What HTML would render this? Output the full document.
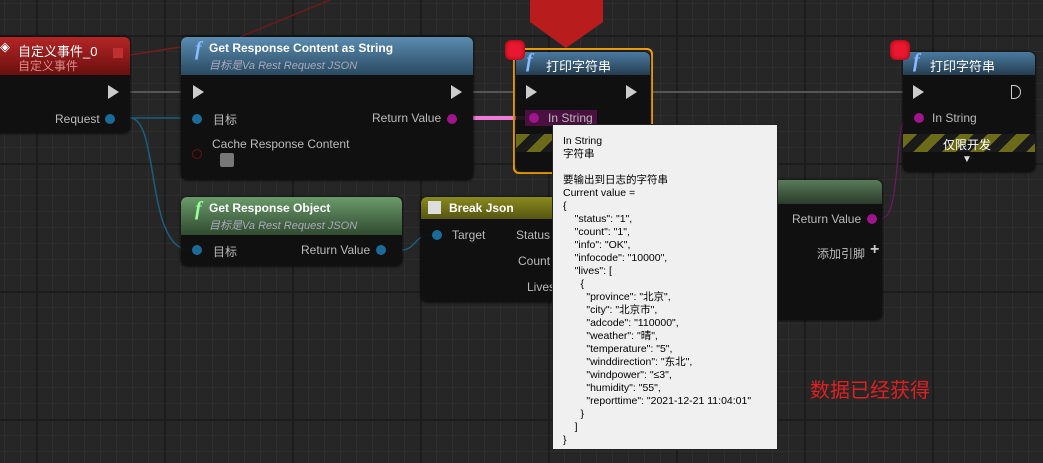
<!DOCTYPE html><html><head><meta charset="utf-8"><style>
body{margin:0;width:1043px;height:463px;overflow:hidden;position:relative;font-family:"Liberation Sans","Noto Sans CJK SC",sans-serif;
background-color:#262626;
background-image:linear-gradient(#1c1c1c 2px,transparent 2px),linear-gradient(90deg,#1c1c1c 2px,transparent 2px),linear-gradient(#2e2e2e 1px,transparent 1px),linear-gradient(90deg,#2e2e2e 1px,transparent 1px);
background-size:128px 128px,128px 128px,16px 16px,16px 16px;background-position:-93px 35px,36px -93px,0 3px,4px 0;}
.n{position:absolute;background:rgba(14,15,14,.93);border-radius:6px;box-shadow:0 0 3px #000;color:#bbb;font-size:12px;overflow:hidden}
.h{height:38px;position:relative;color:#fff;font-weight:bold;font-size:12px}
.h .t{position:absolute;left:28px;top:4px}
.h .s{position:absolute;left:28px;top:20px;font-weight:normal;font-style:italic;color:#aab;font-size:11px}
.f{position:absolute;left:14px;top:1px;color:#8bf;font-style:italic;font-family:"Liberation Serif",serif;font-size:20px}
.a{position:absolute;width:0;height:0;border-top:7px solid transparent;border-bottom:7px solid transparent;border-left:11px solid #ccc}
.p{position:absolute;width:10px;height:10px;border-radius:50%}
.l{position:absolute;font-size:12px;color:#bbb}
.tip{position:absolute;left:552px;top:124px;width:226px;height:326px;background:#f0f0f0;border:1px solid #222;font-size:10.5px;line-height:13px;color:#000;padding:10px 0 0 10px;box-sizing:border-box;white-space:pre;font-family:"Liberation Sans","Noto Sans CJK SC",sans-serif}
.hz{position:absolute;background:repeating-linear-gradient(135deg,#6b6b1a 0 10px,#1a1a1a 10px 20px)}
</style></head><body>
<svg style="position:absolute;left:0;top:0" width="1043" height="463">
<path d="M130 55 L181 47" stroke="#7a1c1c" stroke-width="1.5" fill="none"/>
<path d="M240 37 L330 0" stroke="#6a1c1c" stroke-width="1.5"/>
<path d="M130 92 L181 92 M473 92 L513 92 M653 92 L903 92" stroke="#555" stroke-width="2"/>
<path d="M130 118 L181 118" stroke="#1b5e7e" stroke-width="1.5"/>
<path d="M130 118 C160 118 145 250 190 250" stroke="#1b5e7e" stroke-width="1.5" fill="none"/>
<path d="M402 250 C415 250 415 235 430 235" stroke="#1b5e7e" stroke-width="1.5" fill="none"/>
<path d="M473 118 L530 118" stroke="#f07ad8" stroke-width="4"/>
<path d="M882 218 C900 218 895 130 905 118" stroke="#7a1670" stroke-width="1" fill="none"/>
<path d="M530 0 L603 0 L603 22 L566 48 L530 22Z" fill="#b81c1c"/>
</svg>
<div class="n" style="left:-8px;top:37px;width:138px;height:96px"><div class="h" style="background:linear-gradient(#b52525,#6a1010)"><span class="t" style="left:26px;font-weight:normal;font-size:13px">自定义事件_0</span><span class="s" style="left:26px;font-style:normal;color:#d88;font-size:12px">自定义事件</span><div style="position:absolute;left:121px;top:11px;width:10px;height:10px;background:#c03030"></div></div>
<div class="a" style="left:116px;top:48px"></div><span class="l" style="left:63px;top:75px">Request</span><div class="p" style="left:113px;top:77px;background:#1a6b9a"></div></div>
<div style="position:absolute;left:0;top:39px;color:#fff;font-size:13px">◈</div>
<div class="n" style="left:181px;top:37px;width:292px;height:143px"><div class="h" style="background:linear-gradient(#5a8cb0,#2a4a62)"><span class="f">f</span><span class="t">Get Response Content as String</span><span class="s">目标是Va Rest Request JSON</span></div>
<div class="a" style="left:12px;top:48px"></div><div class="a" style="left:270px;top:48px"></div>
<div class="p" style="left:11px;top:77px;background:#1a6b9a"></div><span class="l" style="left:32px;top:74px">目标</span>
<span class="l" style="left:191px;top:74px">Return Value</span><div class="p" style="left:266px;top:77px;background:#a0148c"></div>
<div class="p" style="left:11px;top:112px;border:1.5px solid #6a1010;width:8px;height:8px;background:none"></div><span class="l" style="left:31px;top:100px">Cache Response Content</span>
<div style="position:absolute;left:39px;top:116px;width:14px;height:14px;background:#777;border-radius:2px"></div></div>
<div class="n" style="left:181px;top:197px;width:221px;height:69px"><div class="h" style="background:linear-gradient(#6a9a6a,#304a30)"><span class="f" style="color:#9f9">f</span><span class="t">Get Response Object</span><span class="s">目标是Va Rest Request JSON</span></div>
<div class="p" style="left:11px;top:48px;background:#1a6b9a"></div><span class="l" style="left:32px;top:46px">目标</span><span class="l" style="left:120px;top:46px">Return Value</span><div class="p" style="left:195px;top:48px;background:#1a6b9a"></div></div>
<div class="n" style="left:421px;top:197px;width:150px;height:105px"><div class="h" style="height:22px;background:linear-gradient(#8a8a20,#555510)"><div style="position:absolute;left:7px;top:4px;width:13px;height:13px;background:#ddd"></div><span class="t" style="top:4px">Break Json</span></div>
<div class="p" style="left:11px;top:33px;background:#1a6b9a"></div><span class="l" style="left:31px;top:31px">Target</span><span class="l" style="left:95px;top:31px">Status</span><span class="l" style="left:97px;top:57px">Count</span><span class="l" style="left:106px;top:83px">Lives</span></div>
<div class="n" style="left:720px;top:180px;width:162px;height:140px"><div class="h" style="height:24px;background:linear-gradient(#5a7a5a,#2a3a2a)"></div>
<span class="l" style="left:72px;top:32px">Return Value</span><div class="p" style="left:147px;top:34px;background:#a0148c"></div>
<span class="l" style="left:97px;top:65px">添加引脚</span><span style="position:absolute;left:150px;top:62px;color:#ccc;font-size:16px;font-weight:bold;line-height:16px">+</span></div>
<div style="position:absolute;left:513px;top:48px;width:140px;height:126px;border:2px solid #f0a000;border-radius:6px;box-sizing:border-box"></div>
<div class="n" style="left:516px;top:52px;width:134px;height:119px"><div class="h" style="height:23px;background:linear-gradient(#4a7aa0,#253d50)"><span class="f" style="top:-2px;left:10px">f</span><span class="t" style="top:4px;left:30px;font-weight:normal;font-size:13px">打印字符串</span></div>
<div class="a" style="left:10px;top:33px"></div><div class="a" style="left:110px;top:33px"></div>
<div style="position:absolute;left:9px;top:58px;width:72px;height:16px;background:#4a1040"></div><div class="p" style="left:13px;top:61px;background:#a0148c"></div><span class="l" style="left:32px;top:59px">In String</span>
<div class="hz" style="left:0;top:82px;width:134px;height:18px"></div></div>
<div class="n" style="left:903px;top:52px;width:132px;height:120px"><div class="h" style="height:23px;background:linear-gradient(#4a7aa0,#253d50)"><span class="f" style="top:-2px;left:10px">f</span><span class="t" style="top:4px;left:27px;font-weight:normal;font-size:13px">打印字符串</span></div>
<div class="a" style="left:10px;top:33px"></div><div style="position:absolute;left:108px;top:33px;width:8px;height:12px;border:1.5px solid #ccc;border-radius:0 7px 7px 0"></div>
<div class="p" style="left:11px;top:61px;background:#a0148c"></div><span class="l" style="left:29px;top:59px">In String</span>
<div class="hz" style="left:0;top:82px;width:132px;height:18px"></div><span style="position:absolute;left:40px;top:84px;color:#fff;font-size:12px">仅限开发</span><span style="position:absolute;left:59px;top:102px;color:#ddd;font-size:10px">▼</span></div>
<div style="position:absolute;left:505px;top:40px;width:20px;height:20px;background:#e81830;border-radius:6px;box-shadow:inset 0 0 4px #800"></div>
<div style="position:absolute;left:890px;top:40px;width:20px;height:20px;background:#e81830;border-radius:6px;box-shadow:inset 0 0 4px #800"></div>
<div class="tip">In String
字符串

要输出到日志的字符串
Current value =
{
    "status": "1",
    "count": "1",
    "info": "OK",
    "infocode": "10000",
    "lives": [
      {
        "province": "北京",
        "city": "北京市",
        "adcode": "110000",
        "weather": "晴",
        "temperature": "5",
        "winddirection": "东北",
        "windpower": "≤3",
        "humidity": "55",
        "reporttime": "2021-12-21 11:04:01"
      }
    ]
}</div>
<div style="position:absolute;left:810px;top:374px;color:#e02020;font-size:20px">数据已经获得</div>
</body></html>
